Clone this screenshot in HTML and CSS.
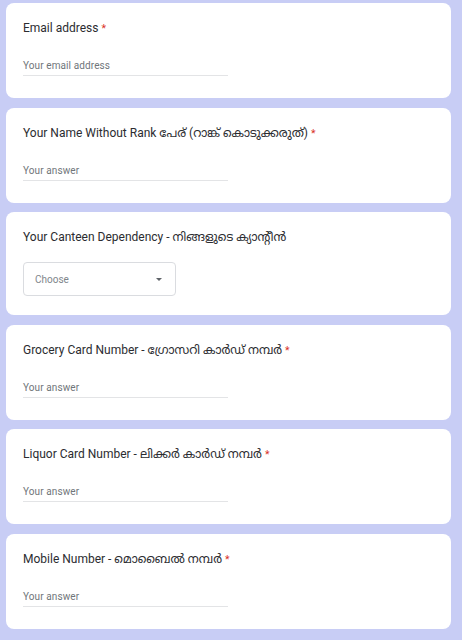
FILE: index.html
```html
<!DOCTYPE html>
<html lang="ml">
<head>
<meta charset="utf-8">
<title>Form</title>
<link rel="stylesheet" href="styles.css">
</head>
<body>
<main class="form">
  <section class="card">
    <div class="q-title">Email address <span class="req">*</span></div>
    <div class="text-input">Your email address</div>
  </section>
  <section class="card">
    <div class="q-title">Your Name Without Rank പേര് (റാങ്ക് കൊടുക്കരുത്) <span class="req">*</span></div>
    <div class="text-input">Your answer</div>
  </section>
  <section class="card card-select">
    <div class="q-title">Your Canteen Dependency - നിങ്ങളുടെ ക്യാന്റീൻ</div>
    <div class="select">
      <span class="select-label">Choose</span>
      <span class="select-arrow"></span>
    </div>
  </section>
  <section class="card">
    <div class="q-title">Grocery Card Number - ഗ്രോസറി കാർഡ് നമ്പർ <span class="req">*</span></div>
    <div class="text-input">Your answer</div>
  </section>
  <section class="card">
    <div class="q-title">Liquor Card Number - ലിക്കർ കാർഡ് നമ്പർ <span class="req">*</span></div>
    <div class="text-input">Your answer</div>
  </section>
  <section class="card">
    <div class="q-title">Mobile Number - മൊബൈൽ നമ്പർ <span class="req">*</span></div>
    <div class="text-input">Your answer</div>
  </section>
</main>
</body>
</html>
```
FILE: styles.css
```css
html, body {
  margin: 0;
  padding: 0;
}
body {
  background: #c8cdf5;
  font-family: Roboto, "Noto Sans", "Noto Sans Malayalam", sans-serif;
  color: #202124;
}
.form {
  display: flex;
  flex-direction: column;
  gap: 9.5px;
  padding: 3px 11px 10px 6px;
}
.card {
  background: #ffffff;
  border-radius: 8px;
  padding: 16px 17px 22px;
  height: 95px;
  box-sizing: border-box;
}
.card-select {
  height: 103px;
}
.q-title {
  font-size: 12px;
  line-height: 18px;
  height: 18px;
  white-space: nowrap;
  color: #2b2c30;
}
.req {
  color: #d93025;
  font-size: 10.5px;
}
.text-input {
  margin-top: 16px;
  width: 205px;
  font-size: 10px;
  line-height: 12px;
  padding: 7px 0 3px;
  color: #70757a;
  letter-spacing: 0.1px;
  border-bottom: 1px solid #e3e4e6;
}
.select {
  margin-top: 16px;
  width: 153px;
  height: 34px;
  box-sizing: border-box;
  border: 1px solid #dadce0;
  border-radius: 4px;
  display: flex;
  align-items: center;
  justify-content: space-between;
  padding: 0 13px 0 11px;
}
.select-label {
  font-size: 10px;
  color: #80868b;
}
.select-arrow {
  width: 0;
  height: 0;
  border-left: 3.5px solid transparent;
  border-right: 3.5px solid transparent;
  border-top: 3.5px solid #5f6368;
}
```
